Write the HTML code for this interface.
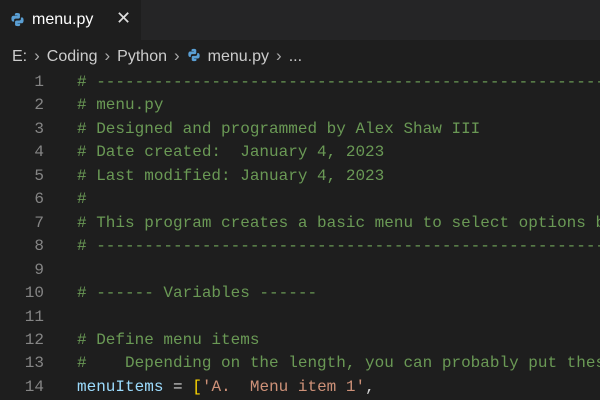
<!DOCTYPE html><html><head><style>
body{margin:0;width:600px;height:400px;background:#1e1e1e;overflow:hidden;font-family:"Liberation Sans",sans-serif}
.tabs{height:40px;background:#252526;position:relative}
.tab{position:absolute;left:0;top:0;width:141px;height:40px;background:#1e1e1e;color:#fff;font-size:16px}
.tab span{position:absolute;left:32px;top:11px}
.x{position:absolute;left:116px;top:8px;font-size:18px;color:#ddd}
.bc{position:absolute;top:46px;left:12px;color:#ccc;font-size:16px;white-space:nowrap}
.bc i{font-style:normal;color:#aaa;margin:0 7px;font-size:17px}
.code{position:absolute;top:71px;left:0;width:600px;height:329px;overflow:hidden;font-family:"Liberation Mono",monospace;font-size:16px;line-height:23.45px;white-space:pre}
.ln{position:absolute;left:0;width:44px;text-align:right;color:#858585}
.t{position:absolute;left:77px;color:#6a9955}
.v{color:#9cdcfe}.o{color:#d4d4d4}.s{color:#ce9178}.b{color:#ffd700}
</style></head><body>
<div class="tabs"><div class="tab">
<svg style="position:absolute;left:10px;top:12px" width="15" height="15" viewBox="0 0 16 16"><path d="M7.8 1C5 1 5.2 2.2 5.2 2.2V3.6h2.7V4H3.6S1.5 3.8 1.5 7.1s1.8 3.1 1.8 3.1h1.1V8.7S4.3 7 6.1 7h2.8s1.7 0 1.7-1.6V2.6S10.9 1 7.8 1z" fill="#5a9fd4"/><path d="M8.2 15c2.8 0 2.6-1.2 2.6-1.2V12.4H8.1V12h4.3s2.1.2 2.1-3.1-1.8-3.1-1.8-3.1h-1.1v1.5s.1 1.7-1.7 1.7H7.1s-1.7 0-1.7 1.6v2.8S5.1 15 8.2 15z" fill="#5a9fd4"/></svg>
<span>menu.py</span><div class="x">✕</div></div></div>
<div class="bc">E:<i>›</i>Coding<i>›</i>Python<i>›</i><svg width="14" height="14" viewBox="0 0 16 16" style="vertical-align:-1px;margin-right:7px"><path d="M7.8 1C5 1 5.2 2.2 5.2 2.2V3.6h2.7V4H3.6S1.5 3.8 1.5 7.1s1.8 3.1 1.8 3.1h1.1V8.7S4.3 7 6.1 7h2.8s1.7 0 1.7-1.6V2.6S10.9 1 7.8 1z" fill="#5a9fd4"/><path d="M8.2 15c2.8 0 2.6-1.2 2.6-1.2V12.4H8.1V12h4.3s2.1.2 2.1-3.1-1.8-3.1-1.8-3.1h-1.1v1.5s.1 1.7-1.7 1.7H7.1s-1.7 0-1.7 1.6v2.8S5.1 15 8.2 15z" fill="#5a9fd4"/></svg>menu.py<i>›</i>...</div>
<div class="code">
<div class="ln" style="top:0">1
2
3
4
5
6
7
8
9
10
11
12
13
14</div>
<div class="t" style="top:0"># ----------------------------------------------------------
# menu.py
# Designed and programmed by Alex Shaw III
# Date created:  January 4, 2023
# Last modified: January 4, 2023
#
# This program creates a basic menu to select options b
# ----------------------------------------------------------

# ------ Variables ------

# Define menu items
#    Depending on the length, you can probably put thes
<span class="v">menuItems</span> <span class="o">=</span> <span class="b">[</span><span class="s">'A.  Menu item 1'</span><span class="o">,</span></div>
</div>
</body></html>
